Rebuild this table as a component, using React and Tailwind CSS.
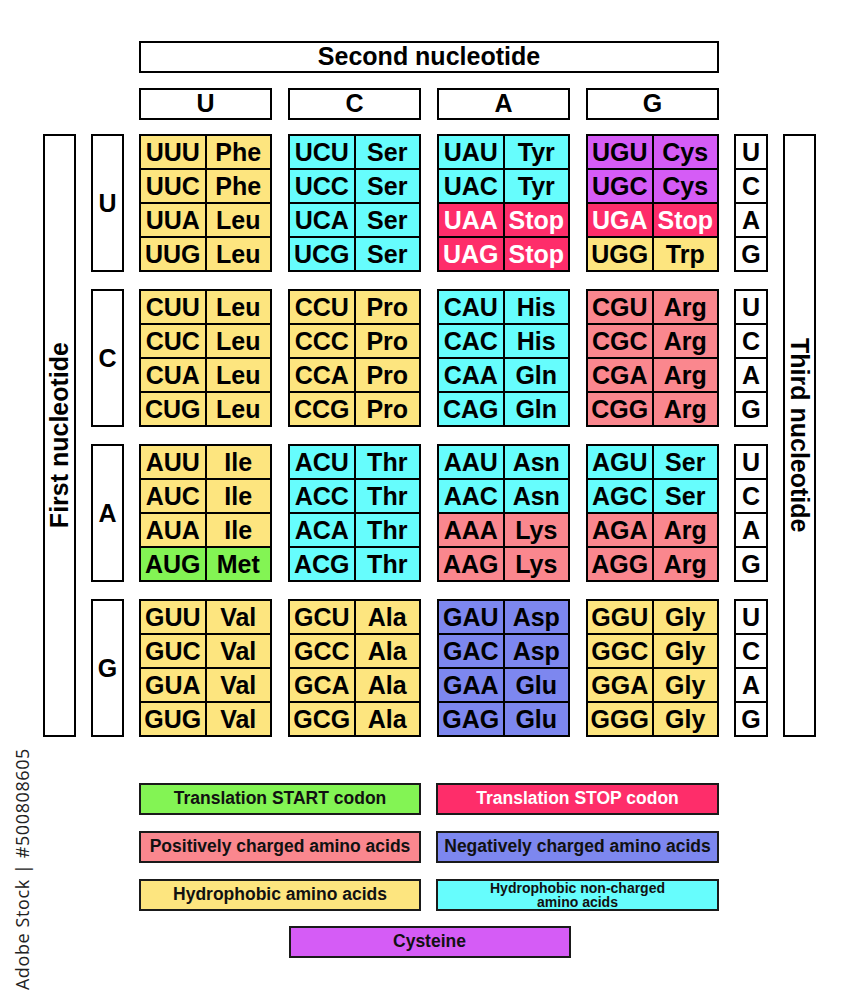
import React from 'react';

const C = {
  y: 'bg-[#fde57f]',
  c: 'bg-[#66fdfd]',
  p: 'bg-[#d55cf6]',
  s: 'bg-[#fe2d6a] text-white',
  r: 'bg-[#fa878e]',
  b: 'bg-[#7d87ef]',
  g: 'bg-[#83f454]',
};

// blocks[firstRow][secondCol] = list of [codon, aa, color]
const blocks = [
  [
    [['UUU', 'Phe', 'y'], ['UUC', 'Phe', 'y'], ['UUA', 'Leu', 'y'], ['UUG', 'Leu', 'y']],
    [['UCU', 'Ser', 'c'], ['UCC', 'Ser', 'c'], ['UCA', 'Ser', 'c'], ['UCG', 'Ser', 'c']],
    [['UAU', 'Tyr', 'c'], ['UAC', 'Tyr', 'c'], ['UAA', 'Stop', 's'], ['UAG', 'Stop', 's']],
    [['UGU', 'Cys', 'p'], ['UGC', 'Cys', 'p'], ['UGA', 'Stop', 's'], ['UGG', 'Trp', 'y']],
  ],
  [
    [['CUU', 'Leu', 'y'], ['CUC', 'Leu', 'y'], ['CUA', 'Leu', 'y'], ['CUG', 'Leu', 'y']],
    [['CCU', 'Pro', 'y'], ['CCC', 'Pro', 'y'], ['CCA', 'Pro', 'y'], ['CCG', 'Pro', 'y']],
    [['CAU', 'His', 'c'], ['CAC', 'His', 'c'], ['CAA', 'Gln', 'c'], ['CAG', 'Gln', 'c']],
    [['CGU', 'Arg', 'r'], ['CGC', 'Arg', 'r'], ['CGA', 'Arg', 'r'], ['CGG', 'Arg', 'r']],
  ],
  [
    [['AUU', 'Ile', 'y'], ['AUC', 'Ile', 'y'], ['AUA', 'Ile', 'y'], ['AUG', 'Met', 'g']],
    [['ACU', 'Thr', 'c'], ['ACC', 'Thr', 'c'], ['ACA', 'Thr', 'c'], ['ACG', 'Thr', 'c']],
    [['AAU', 'Asn', 'c'], ['AAC', 'Asn', 'c'], ['AAA', 'Lys', 'r'], ['AAG', 'Lys', 'r']],
    [['AGU', 'Ser', 'c'], ['AGC', 'Ser', 'c'], ['AGA', 'Arg', 'r'], ['AGG', 'Arg', 'r']],
  ],
  [
    [['GUU', 'Val', 'y'], ['GUC', 'Val', 'y'], ['GUA', 'Val', 'y'], ['GUG', 'Val', 'y']],
    [['GCU', 'Ala', 'y'], ['GCC', 'Ala', 'y'], ['GCA', 'Ala', 'y'], ['GCG', 'Ala', 'y']],
    [['GAU', 'Asp', 'b'], ['GAC', 'Asp', 'b'], ['GAA', 'Glu', 'b'], ['GAG', 'Glu', 'b']],
    [['GGU', 'Gly', 'y'], ['GGC', 'Gly', 'y'], ['GGA', 'Gly', 'y'], ['GGG', 'Gly', 'y']],
  ],
];

const bases = ['U', 'C', 'A', 'G'];

const CodonBlock = ({ rows }) => (
  <div className="grid grid-cols-2 grid-rows-4 gap-[2px] bg-black p-[2px] w-[133px] h-[138px]">
    {rows.map(([codon, aa, col]) => (
      <React.Fragment key={codon}>
        <div className={`${C[col]} flex items-center justify-center`}>{codon}</div>
        <div className={`${C[col]} flex items-center justify-center`}>{aa}</div>
      </React.Fragment>
    ))}
  </div>
);

const Legend = ({ color, children, className = '' }) => (
  <div className={`${color} border-2 border-[#1a1a1a] h-[32px] flex items-center justify-center text-center ${className}`}>
    {children}
  </div>
);

export default function App() {
  return (
    <div className="relative w-[859px] h-[1000px] bg-white text-black overflow-hidden font-['Liberation_Sans',Arial,sans-serif] font-bold">
      {/* Header */}
      <div className="pt-[41px] pl-[139px]">
        <div className="w-[580px] h-[32px] border-2 border-black flex items-center justify-center text-[25px]">
          Second nucleotide
        </div>
        <div className="mt-[15px] flex gap-[16px]">
          {bases.map((b) => (
            <div key={b} className="w-[133px] h-[32px] border-2 border-black flex items-center justify-center text-[25px]">
              {b}
            </div>
          ))}
        </div>
      </div>

      {/* Main table */}
      <div className="mt-[14px] pl-[43px] flex gap-[15px] text-[25px] leading-none">
        <div className="w-[33px] h-[603px] border-2 border-black flex items-center justify-center">
          <span className="[writing-mode:vertical-rl] rotate-180">First nucleotide</span>
        </div>
        <div className="flex flex-col gap-[17px]">
          {bases.map((b) => (
            <div key={b} className="w-[33px] h-[138px] border-2 border-black flex items-center justify-center">
              {b}
            </div>
          ))}
        </div>
        <div className="flex flex-col gap-[17px]">
          {blocks.map((row, i) => (
            <div key={i} className="flex gap-[16px]">
              {row.map((rows, j) => (
                <CodonBlock key={j} rows={rows} />
              ))}
            </div>
          ))}
        </div>
        <div className="flex flex-col gap-[17px]">
          {bases.map((b) => (
            <div key={b} className="w-[34px] h-[138px] grid grid-rows-4 gap-[2px] bg-black p-[2px]">
              {bases.map((t) => (
                <div key={t} className="bg-white flex items-center justify-center">{t}</div>
              ))}
            </div>
          ))}
        </div>
        <div className="w-[33px] h-[603px] border-2 border-black flex items-center justify-center">
          <span className="[writing-mode:vertical-rl]">Third nucleotide</span>
        </div>
      </div>

      {/* Legend */}
      <div className="mt-[46px] pl-[139px] w-[720px] text-[17.5px] leading-none text-[#111]">
        <div className="grid grid-cols-[282px_283px] gap-x-[15px] gap-y-[16px]">
          <Legend color="bg-[#83f454]">Translation START codon</Legend>
          <Legend color="bg-[#fe2d6a] text-white">Translation STOP codon</Legend>
          <Legend color="bg-[#fa878e]">Positively charged amino acids</Legend>
          <Legend color="bg-[#7d87ef]">Negatively charged amino acids</Legend>
          <Legend color="bg-[#fde57f]">Hydrophobic amino acids</Legend>
          <Legend color="bg-[#66fdfd]" className="text-[14px] leading-[14px]">
            Hydrophobic non-charged<br />amino acids
          </Legend>
        </div>
        <div className="mt-[15px] flex justify-center">
          <Legend color="bg-[#d55cf6] w-[282px]">Cysteine</Legend>
        </div>
      </div>

      {/* Watermark */}
      <div className="absolute left-[9px] bottom-[10px] [writing-mode:vertical-rl] rotate-180 font-['Open_Sans',sans-serif] font-normal text-[18px] text-[#222] tracking-[0.6px]">
        Adobe Stock | #500808605
      </div>
    </div>
  );
}
